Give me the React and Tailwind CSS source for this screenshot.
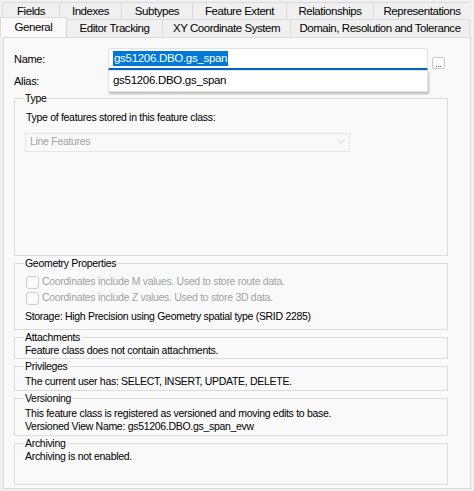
import React from 'react'
import { ChevronDown } from 'lucide-react'

const topTabs = [
  { label: 'Fields', w: 'w-[57px]' },
  { label: 'Indexes', w: 'w-[62px]' },
  { label: 'Subtypes', w: 'w-[71px]' },
  { label: 'Feature Extent', w: 'w-[94px]' },
  { label: 'Relationships', w: 'w-[87px]' },
  { label: 'Representations', w: 'w-[97px]' },
]

const bottomTabs = [
  { label: 'Editor Tracking', w: 'w-[96px]' },
  { label: 'XY Coordinate System', w: 'w-[128px]' },
  { label: 'Domain, Resolution and Tolerance', w: 'w-[179px]' },
]

const Group = ({ title, className, children }) => (
  <fieldset className={`ml-[10px] mr-[22px] border border-[#dcdcdc] pl-[10px] pr-2 ${className}`}>
    <legend className='px-[1px] -ml-[1px] leading-[13px] text-black'>{title}</legend>
    {children}
  </fieldset>
)

const Check = ({ label }) => (
  <div className='flex items-center gap-[3px] h-[16px] ml-[1px]'>
    <span className='w-[13px] h-[13px] border border-[#cfcfcf] rounded-[3px] bg-[#fbfbfb]' />
    <span className='text-[#a3a3a3]'>{label}</span>
  </div>
)

const App = () => {
  return (
    <div className='w-[474px] h-[491px] bg-[#f0f0f0] overflow-hidden text-[10.5px] tracking-[-0.3px] text-black' style={{ fontFamily: '"Liberation Sans", Arial, sans-serif' }}>
      {/* tab strip */}
      <div className='flex pl-[2px] pt-[2px] h-[19px] text-[11.5px] tracking-[-0.45px] whitespace-nowrap'>
        {topTabs.map((t) => (
          <div key={t.label} className={`${t.w} h-full border-l border-t border-[#dadada] flex items-center justify-center pt-[2px]`}>
            {t.label}
          </div>
        ))}
      </div>
      <div className='flex h-[18px] text-[11.5px] tracking-[-0.45px] whitespace-nowrap'>
        <div className='w-[67px] h-[20px] -mt-[2px] bg-[#f9f9f9] border-l border-t border-r border-[#dadada] flex items-center justify-center relative z-10'>
          General
        </div>
        {bottomTabs.map((t) => (
          <div key={t.label} className={`${t.w} h-full border-r border-t border-[#dadada] flex items-center justify-center pt-[1px]`}>
            {t.label}
          </div>
        ))}
      </div>

      {/* page */}
      <div className='mx-[3px] h-[452px] border border-[#dadada] bg-[#f9f9f9] pt-[10px]'>
        <div className='flex items-center h-[22px]'>
          <span className='w-[104px] pl-[10px] text-[11px]'>Name:</span>
          <div className='w-[320px] h-[22px] bg-white border border-[#e2e2e2] border-b-2 border-b-[#0067c0] rounded-t-[3px] flex items-center pl-[4px]'>
            <span className='bg-[#0078d7] text-white text-[11.5px] leading-[15px] px-[1px]'>gs51206.DBO.gs_span</span>
          </div>
          <div className='ml-[4px] mt-[8px] w-[13px] h-[12px] border border-[#c8c8c8] rounded-[2px] bg-[#fdfdfd] flex items-end justify-center text-[9px] leading-[8px] text-[#333]'>
            ...
          </div>
        </div>
        <div className='flex items-center h-[22px]'>
          <span className='w-[104px] pl-[10px] text-[11px]'>Alias:</span>
          <div className='w-[320px] h-[22px] bg-white border border-[#e4e4e4] shadow-[1px_2px_2px_rgba(0,0,0,0.25)] flex items-center pl-[4px] text-[11.5px]'>
            gs51206.DBO.gs_span
          </div>
        </div>

        <div className='flex flex-col gap-[1px]'>
          <Group title='Type' className='h-[164px] pt-[5px]'>
            <div className='pl-[1px]'>Type of features stored in this feature class:</div>
            <div className='mt-[7px] w-[325px] h-[19px] border border-[#e6e6e6] bg-[#f9f9f9] flex items-center justify-between pl-[4px] pr-[2px] text-[#a3a3a3]'>
              <span>Line Features</span>
              <ChevronDown className='w-[12px] h-[12px] text-[#c0c0c0]' strokeWidth={1.5} />
            </div>
          </Group>

          <Group title='Geometry Properties' className='h-[73px] pt-[4px]'>
            <Check label='Coordinates include M values. Used to store route data.' />
            <Check label='Coordinates include Z values. Used to store 3D data.' />
            <div className='mt-[3px]'>Storage: High Precision using Geometry spatial type (SRID 2285)</div>
          </Group>

          <Group title='Attachments' className='h-[28px] pt-[0px]'>
            <div className='leading-[13px]'>Feature class does not contain attachments.</div>
          </Group>

          <Group title='Privileges' className='h-[31px] pt-[2px]'>
            <div className='leading-[13px]'>The current user has: SELECT, INSERT, UPDATE, DELETE.</div>
          </Group>

          <Group title='Versioning' className='h-[44px] pt-[2px]'>
            <div className='leading-[13px]'>This feature class is registered as versioned and moving edits to base.</div>
            <div className='leading-[13px]'>Versioned View Name: gs51206.DBO.gs_span_evw</div>
          </Group>

          <Group title='Archiving' className='h-[48px] pt-[0px]'>
            <div className='leading-[13px]'>Archiving is not enabled.</div>
          </Group>
        </div>
      </div>
    </div>
  )
}

export default App
